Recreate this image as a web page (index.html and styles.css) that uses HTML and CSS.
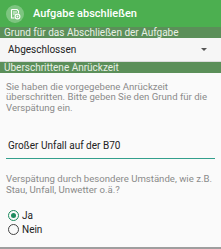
FILE: index.html
```html
<!DOCTYPE html>
<html lang="de">
<head>
<meta charset="utf-8">
<link rel="stylesheet" href="styles.css">
</head>
<body>
<div class="screen">
  <header class="appbar">
    <span class="appicon">
      <svg width="18" height="18" viewBox="0 0 18 18">
        <circle cx="9" cy="9" r="9" fill="rgba(255,255,255,0.28)"/>
        <path d="M5.5 4.5h5.5l1.5 1.5v2.5M5.5 4.5v8.5h3" fill="none" stroke="#fff" stroke-width="1.1"/>
        <path d="M7 7h4M7 9h2.5" stroke="#fff" stroke-width="0.9"/>
        <circle cx="11.5" cy="11.5" r="2.4" fill="none" stroke="#fff" stroke-width="1.1"/>
        <circle cx="11.5" cy="11.5" r="0.9" fill="#fff"/>
      </svg>
    </span>
    <span class="title">Aufgabe abschließen</span>
  </header>
  <div class="band">Grund für das Abschließen der Aufgabe</div>
  <div class="spinner">
    <span>Abgeschlossen</span>
    <span class="caret"></span>
  </div>
  <div class="band">Überschrittene Anrückzeit</div>
  <div class="content">
    <p class="hint">Sie haben die vorgegebene Anrückzeit überschritten. Bitte geben Sie den Grund für die Verspätung ein.</p>
    <div class="input">Großer Unfall auf der B70</div>
    <p class="hint q">Verspätung durch besondere Umstände, wie z.B. Stau, Unfall, Unwetter o.ä.?</p>
    <div class="radios">
      <label class="radio"><span class="dot checked"></span>Ja</label>
      <label class="radio"><span class="dot"></span>Nein</label>
    </div>
  </div>
</div>
</body>
</html>
```

FILE: styles.css
```css
* { box-sizing: border-box; }
html, body { margin: 0; padding: 0; }
body {
  width: 221px;
  height: 249px;
  overflow: hidden;
  background: #fafafa;
  font-family: Roboto, "Noto Sans", sans-serif;
}
.screen {
  height: 249px;
  display: flex;
  flex-direction: column;
  border-bottom: 2px solid #9e9e9e;
}
.appbar {
  height: 27px;
  background: #4caf50;
  display: flex;
  align-items: center;
  padding-left: 6px;
  gap: 9px;
}
.appicon { display: flex; width: 18px; height: 18px; }
.title {
  color: #fff;
  font-size: 11px;
  font-weight: 500;
}
.band {
  height: 11px;
  background: #5b8f59;
  color: #e8f0e6;
  font-size: 10px;
  line-height: 11px;
  padding-left: 4px;
  white-space: nowrap;
}
.spinner {
  height: 24px;
  background: #f6f6f6;
  border-bottom: 1px solid #dcdcdc;
  display: flex;
  align-items: center;
  justify-content: space-between;
  padding: 0 14px 0 8px;
  font-size: 10px;
  color: #222;
}
.caret {
  width: 0; height: 0;
  border-left: 3px solid transparent;
  border-right: 3px solid transparent;
  border-top: 3px solid #555;
}
.content {
  flex: 1;
  padding: 9px 6px 0 6px;
}
.hint {
  margin: 0;
  font-size: 9.6px;
  line-height: 10.3px;
  color: #8a8a8a;
}
.input {
  margin-top: 26px;
  padding: 0 0 6px 2px;
  font-size: 10px;
  line-height: 13px;
  color: #222;
  border-bottom: 1.5px solid #339f8c;
}
.q { margin-top: 14px; line-height: 11px; }
.radios {
  margin-top: 15px;
  display: flex;
  flex-direction: column;
  gap: 3px;
  padding-left: 2px;
}
.radio {
  display: flex;
  align-items: center;
  gap: 3px;
  font-size: 10px;
  color: #222;
  height: 11px;
}
.dot {
  width: 11px; height: 11px;
  border-radius: 50%;
  border: 1.3px solid #444;
  display: flex;
  align-items: center;
  justify-content: center;
}
.dot.checked { border-color: #1d8b5f; }
.dot.checked::after {
  content: "";
  width: 5px; height: 5px;
  border-radius: 50%;
  background: #1d8b5f;
}
```
